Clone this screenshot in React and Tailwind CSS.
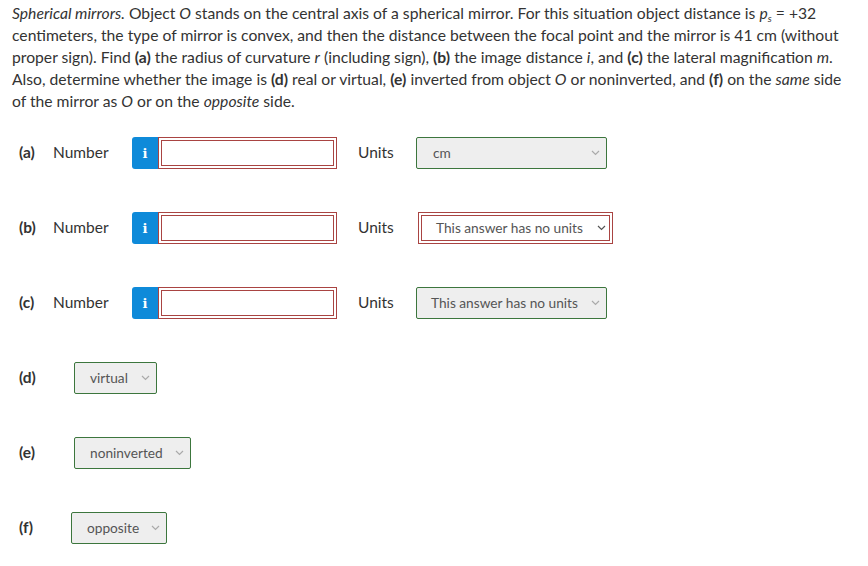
import React from "react";

const font = { fontFamily: "Lato, 'Open Sans', sans-serif" };

const Chevron = ({ dark }) => (
  <svg width="9" height="6" viewBox="0 0 9 6" className="shrink-0">
    <path d="M1 1l3.5 3.5L8 1" fill="none" stroke={dark ? "#555" : "#aaa"} strokeWidth="1.2" />
  </svg>
);

const InfoBtn = () => (
  <div className="w-[26px] h-[32px] bg-[#0e8ad9] rounded-l-[3px] flex items-center justify-center">
    <span className="text-white font-bold text-[13px] leading-none font-['DejaVu_Serif',serif]">i</span>
  </div>
);

const RedInput = () => (
  <div className="w-[179px] h-[32px] border border-[#a94442] p-[2px] bg-white">
    <div className="w-full h-full border border-[#a94442]" />
  </div>
);

const GreenSelect = ({ value, w, pl = "pl-[15px]", pr = "pr-[6px]" }) => (
  <div
    className={`${w} h-[32px] border border-[#3c763d] bg-[#eeeeee] rounded-[2px] flex items-center justify-between ${pl} ${pr}`}
  >
    <span className="text-[13.7px] text-[#555]">{value}</span>
    <Chevron />
  </div>
);

const NumberRow = ({ label, units }) => (
  <div className="flex items-center h-[32px] text-[15.5px] text-[#333]">
    <span className="w-[41px] pl-[7px] font-bold">{label}</span>
    <span className="w-[79px]">Number</span>
    <InfoBtn />
    <RedInput />
    <span className="ml-[21px] w-[58px]">Units</span>
    {units}
  </div>
);

export default function App() {
  return (
    <div style={font} className="w-[868px] h-[566px] bg-white pl-[12px] pt-[2px] text-[#333]">
      <p className="text-[15.7px] leading-[22px] w-[836px]">
        <i>Spherical mirrors.</i> Object <i>O</i> stands on the central axis of a spherical mirror. For this
        situation object distance is <i>p</i>
        <sub className="text-[10px]"><i>s</i></sub> = +32 centimeters, the type of mirror is convex, and then the
        distance between the focal point and the mirror is 41&nbsp;cm (without proper sign). Find <b>(a)</b> the
        radius of curvature <i>r</i> (including sign), <b>(b)</b> the image distance <i>i</i>, and <b>(c)</b> the
        lateral magnification <i>m</i>. Also, determine whether the image is <b>(d)</b> real or virtual,{" "}
        <b>(e)</b> inverted from object <i>O</i> or noninverted, and <b>(f)</b> on the <i>same</i> side of the
        mirror as <i>O</i> or on the <i>opposite</i> side.
      </p>

      <div className="mt-[25px] flex flex-col gap-[43px]">
        <NumberRow label="(a)" units={<GreenSelect value="cm" w="w-[191px]" pl="pl-[16px]" />} />
        <NumberRow
          label="(b)"
          units={
            <div className="w-[195px] h-[32px] border border-[#a94442] p-[2px] bg-white ml-[2px]">
              <div className="w-full h-full border border-[#a94442] flex items-center justify-between pl-[14px] pr-[3px]">
                <span className="text-[13.7px] text-[#555]">This answer has no units</span>
                <Chevron dark />
              </div>
            </div>
          }
        />
        <NumberRow
          label="(c)"
          units={<GreenSelect value="This answer has no units" w="w-[191px]" pl="pl-[14px]" />}
        />

        <div className="flex items-center h-[32px] text-[15.5px]">
          <span className="w-[62px] pl-[7px] font-bold">(d)</span>
          <GreenSelect value="virtual" w="w-[83px]" />
        </div>
        <div className="flex items-center h-[32px] text-[15.5px]">
          <span className="w-[62px] pl-[7px] font-bold">(e)</span>
          <GreenSelect value="noninverted" w="w-[117px]" />
        </div>
        <div className="flex items-center h-[32px] text-[15.5px]">
          <span className="w-[59px] pl-[7px] font-bold">(f)</span>
          <GreenSelect value="opposite" w="w-[96px]" />
        </div>
      </div>
    </div>
  );
}
